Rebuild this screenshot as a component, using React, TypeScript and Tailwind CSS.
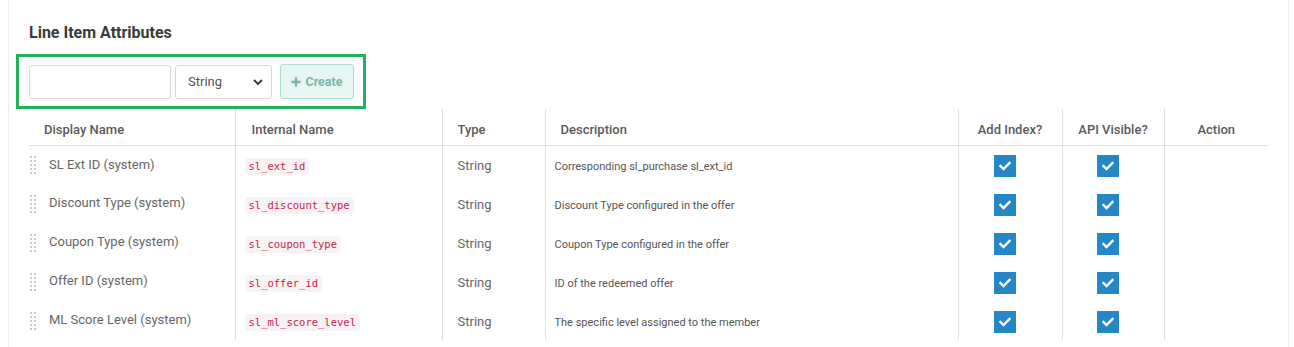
import React from "react";

const rows = [
  { name: "SL Ext ID (system)", internal: "sl_ext_id", desc: "Corresponding sl_purchase sl_ext_id" },
  { name: "Discount Type (system)", internal: "sl_discount_type", desc: "Discount Type configured in the offer" },
  { name: "Coupon Type (system)", internal: "sl_coupon_type", desc: "Coupon Type configured in the offer" },
  { name: "Offer ID (system)", internal: "sl_offer_id", desc: "ID of the redeemed offer" },
  { name: "ML Score Level (system)", internal: "sl_ml_score_level", desc: "The specific level assigned to the member" },
];

function DragHandle() {
  return (
    <div className="grid grid-cols-2 gap-x-[2px] gap-y-[2px] w-[6px] mt-[1px]">
      {Array.from({ length: 10 }).map((_, i) => (
        <div key={i} className="w-[2px] h-[2px] bg-[#c8c8c8]" />
      ))}
    </div>
  );
}

function Check() {
  return (
    <div className="w-[22px] h-[22px] bg-[#2488c6] flex items-center justify-center">
      <svg width="12" height="10" viewBox="0 0 12 10">
        <path d="M1.5 5 L4.5 8 L10.5 2" stroke="white" strokeWidth="2.4" fill="none" strokeLinecap="square" />
      </svg>
    </div>
  );
}

export default function App() {
  const font = { fontFamily: "Roboto, 'Liberation Sans', sans-serif" };
  return (
    <div className="w-[1294px] h-[347px] bg-white overflow-hidden" style={font}>
      <div className="ml-[8px] w-[1281px] h-full border-l border-r border-[#ececec] pl-[7px]">
        <h2 className="ml-[13px] pt-[22px] h-[54px] text-[16px] leading-[22px] font-bold text-[#363b3b]">
          Line Item Attributes
        </h2>
        <div className="w-[350px] h-[55px] border-[3px] border-[#21b25c] flex items-center pl-[10px] gap-[4px]">
          <input className="w-[142px] h-[34px] border border-[#d9d9d9] rounded-[3px] bg-white outline-none" />
          <div className="relative w-[97px] h-[34px] border border-[#d9d9d9] rounded-[3px] flex items-center pl-[12px] text-[13px] text-[#555]">
            String
            <svg className="absolute right-[8px] top-[13px]" width="10" height="7" viewBox="0 0 10 7">
              <path d="M1 1 L5 5 L9 1" stroke="#333" strokeWidth="1.8" fill="none" />
            </svg>
          </div>
          <button className="ml-[4px] w-[74px] h-[35px] pt-[1px] border border-[#a9dfd3] rounded-[3px] bg-[#e6f6f3] text-[12.5px] font-bold text-[#7db3a7] flex items-center justify-center gap-[4px]">
            <svg width="10" height="10" viewBox="0 0 10 10">
              <path d="M5 0.5 V9.5 M0.5 5 H9.5" stroke="#7db3a7" strokeWidth="2.4" />
            </svg>
            Create
          </button>
        </div>
        <table className="ml-[13px] w-[1239px] border-collapse table-fixed">
          <colgroup>
            <col className="w-[206px]" />
            <col className="w-[207px]" />
            <col className="w-[103px]" />
            <col className="w-[413px]" />
            <col className="w-[104px]" />
            <col className="w-[102px]" />
            <col className="w-[104px]" />
          </colgroup>
          <thead>
            <tr className="h-[36px] border-b border-[#dedede] text-[13px] text-[#5a5a5a]">
              <th className="align-bottom pb-[5px] text-left pl-[15px] font-medium">Display Name</th>
              <th className="align-bottom pb-[5px] text-left pl-[16px] font-medium border-l border-[#dedede]">Internal Name</th>
              <th className="align-bottom pb-[5px] text-left pl-[15px] font-medium border-l border-[#dedede]">Type</th>
              <th className="align-bottom pb-[5px] text-left pl-[15px] font-medium border-l border-[#dedede]">Description</th>
              <th className="align-bottom pb-[5px] text-center font-medium border-l border-[#dedede]">Add Index?</th>
              <th className="align-bottom pb-[5px] text-center font-medium border-l border-[#dedede]">API Visible?</th>
              <th className="align-bottom pb-[5px] text-center font-medium border-l border-[#dedede]">Action</th>
            </tr>
          </thead>
          <tbody>
            {rows.map((r) => (
              <tr key={r.internal} className="h-[39px]">
                <td className="pl-[1px]">
                  <div className="flex items-center gap-[13px] -mt-[1px]">
                    <DragHandle />
                    <span className="text-[13px] text-[#666]">{r.name}</span>
                  </div>
                </td>
                <td className="pl-[9px] pt-[1px] border-l border-[#dedede]">
                  <span
                    className="inline-block px-[4px] py-[1px] rounded-[4px] bg-[#f9f2f4] text-[#c7254e] text-[10.5px] leading-[15px]"
                    style={{ fontFamily: "'DejaVu Sans Mono', 'Liberation Mono', monospace" }}
                  >
                    {r.internal}
                  </span>
                </td>
                <td className="pl-[15px] pt-[2px] text-[13px] text-[#666] border-l border-[#dedede]">String</td>
                <td className="pl-[9px] pt-[5px] text-[11px] text-[#555] border-l border-[#dedede]">{r.desc}</td>
                <td className="pl-[35px] pt-[2px] border-l border-[#dedede]">
                  <Check />
                </td>
                <td className="pl-[34px] pt-[2px] border-l border-[#dedede]">
                  <Check />
                </td>
                <td className="border-l border-[#dedede]"></td>
              </tr>
            ))}
          </tbody>
        </table>
      </div>
    </div>
  );
}
